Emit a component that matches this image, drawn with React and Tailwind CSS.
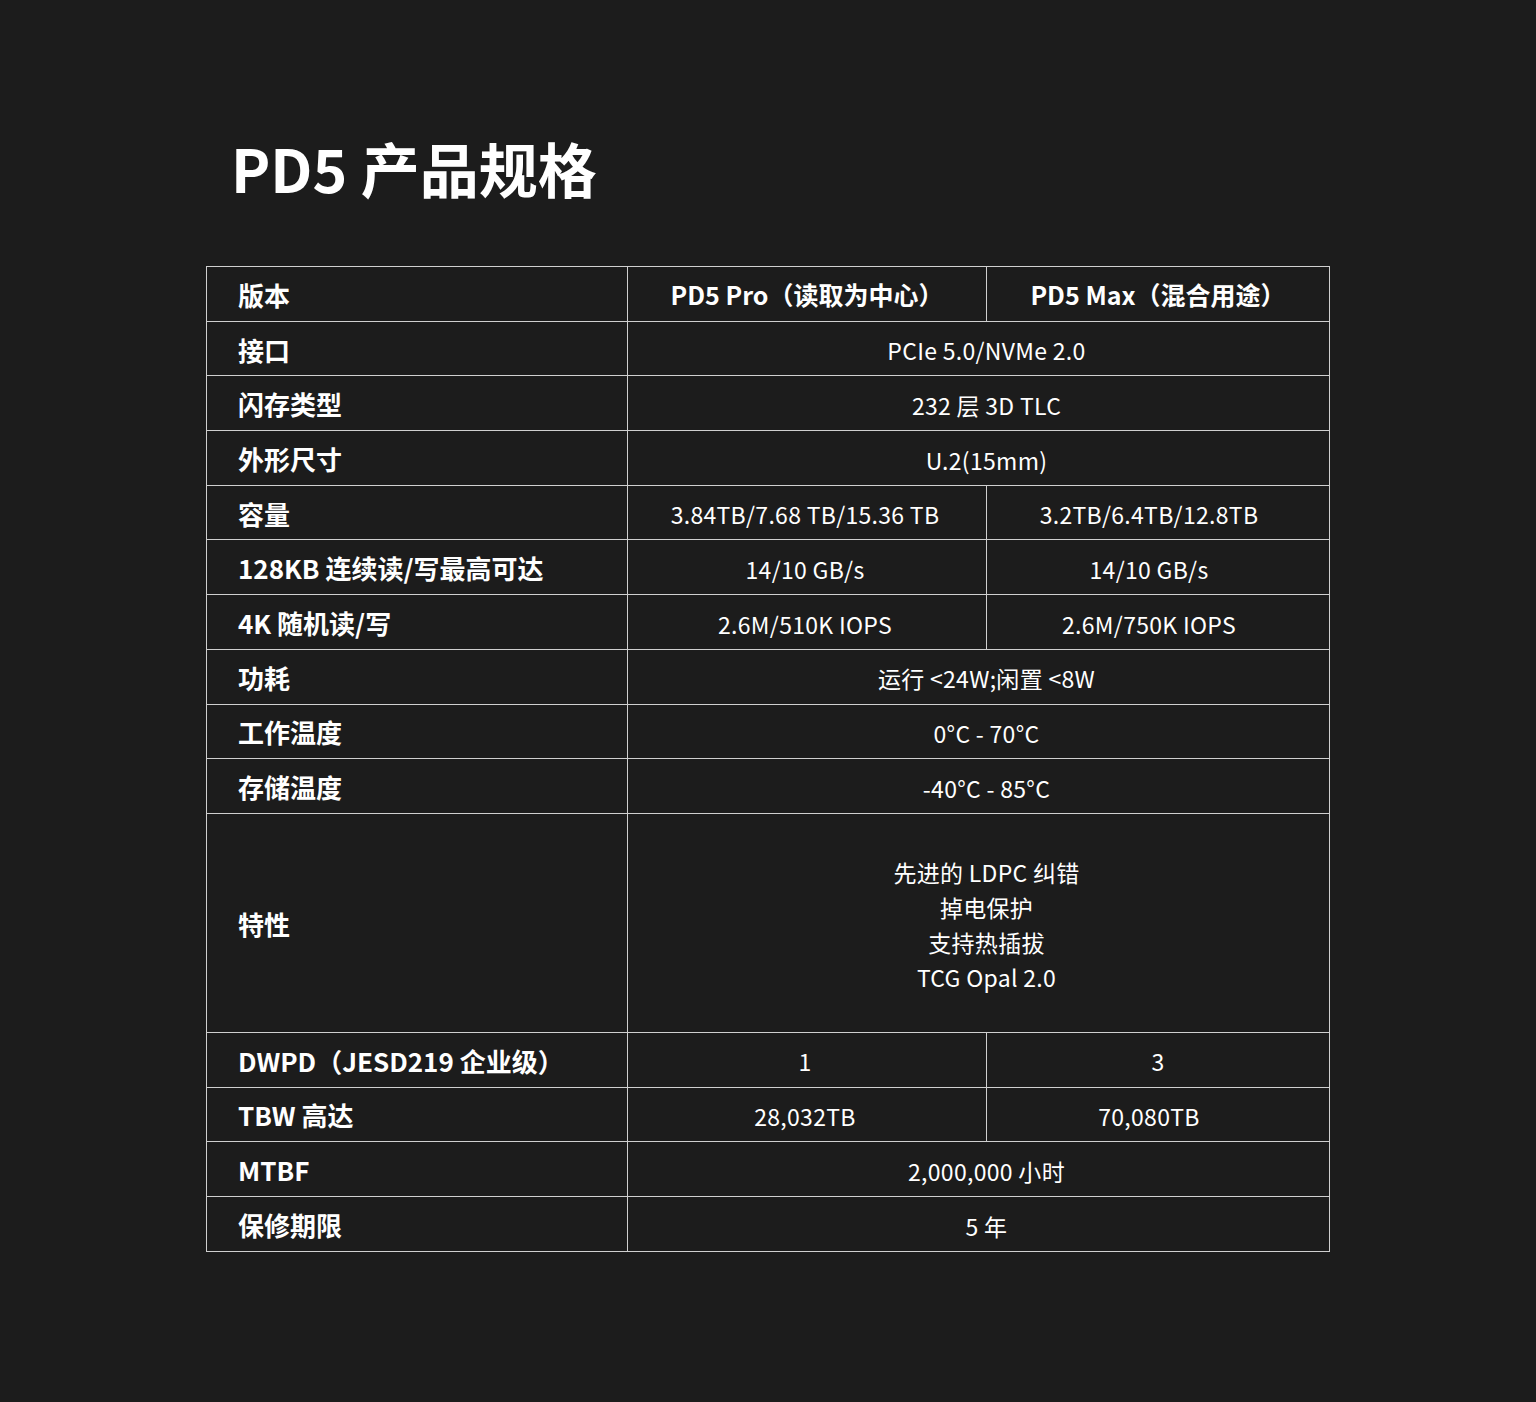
import React from 'react';

// shift: values in the Max column sit a little left of centre in the original
const rows = [
  { label: '接口', span: 'PCIe 5.0/NVMe 2.0' },
  { label: '闪存类型', span: '232 层 3D TLC' },
  { label: '外形尺寸', span: 'U.2(15mm)' },
  { label: '容量', pro: '3.84TB/7.68 TB/15.36 TB', max: '3.2TB/6.4TB/12.8TB', shift: true },
  { label: '128KB 连续读/写最高可达', pro: '14/10 GB/s', max: '14/10 GB/s', shift: true },
  { label: '4K 随机读/写', pro: '2.6M/510K IOPS', max: '2.6M/750K IOPS', shift: true },
  { label: '功耗', span: '运行 <24W;闲置 <8W' },
  { label: '工作温度', span: '0°C - 70°C' },
  { label: '存储温度', span: '-40°C - 85°C' },
  { label: '特性', lines: ['先进的 LDPC 纠错', '掉电保护', '支持热插拔', 'TCG Opal 2.0'] },
  { label: 'DWPD（JESD219 企业级）', pro: '1', max: '3' },
  { label: 'TBW 高达', pro: '28,032TB', max: '70,080TB', shift: true },
  { label: 'MTBF', span: '2,000,000 小时' },
  { label: '保修期限', span: '5 年' },
];

const cell = 'border border-[#cfcfcf] pt-[4px] text-center text-[23px] font-normal tracking-[0.3px]';
const labelCell = 'border border-[#cfcfcf] pl-[31px] pt-[1px] text-[26px] font-bold';

export default function App() {
  return (
    <div
      className="min-h-[1402px] bg-[#1c1c1c] text-white pt-[128px]"
      style={{ fontFamily: '"Noto Sans CJK SC", "Noto Sans", sans-serif' }}
    >
      <h1 className="ml-[231px] text-[59px] font-bold leading-[80px]">PD5 产品规格</h1>

      <table className="ml-[206px] mt-[58px] w-[1123px] border-collapse table-fixed">
        <colgroup>
          <col className="w-[421px]" />
          <col className="w-[359px]" />
          <col className="w-[343px]" />
        </colgroup>
        <tbody>
          <tr className="h-[54.7px]">
            <td className={labelCell}>版本</td>
            <td className="border border-[#cfcfcf] pt-[2px] text-center text-[25px] font-bold">PD5 Pro（读取为中心）</td>
            <td className="border border-[#cfcfcf] pt-[2px] text-center text-[25px] font-bold">PD5 Max（混合用途）</td>
          </tr>
          {rows.map((r) => (
            <tr key={r.label} className={r.lines ? 'h-[219px]' : 'h-[54.7px]'}>
              <td className={labelCell}>{r.label}</td>
              {r.span && (
                <td colSpan={2} className={cell + ' pl-[16px]'}>
                  {r.span}
                </td>
              )}
              {r.lines && (
                <td colSpan={2} className={cell + ' pl-[16px] leading-[35px]'}>
                  {r.lines.map((l) => (
                    <div key={l}>{l}</div>
                  ))}
                </td>
              )}
              {r.pro && (
                <>
                  <td className={cell + ' pr-[4px]'}>{r.pro}</td>
                  <td className={cell + (r.shift ? ' pr-[18px]' : '')}>{r.max}</td>
                </>
              )}
            </tr>
          ))}
        </tbody>
      </table>
    </div>
  );
}
